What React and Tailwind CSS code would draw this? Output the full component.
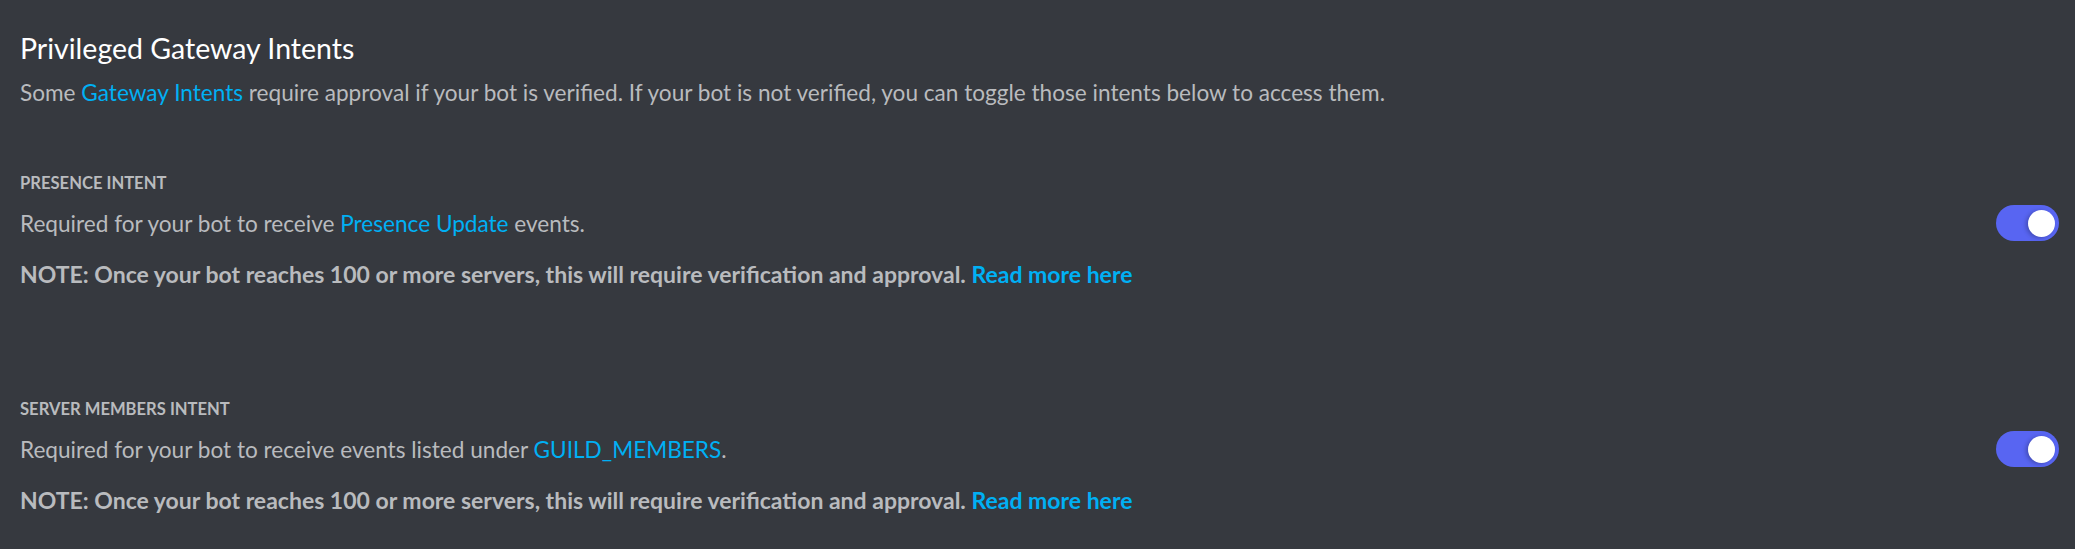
const Toggle = () => (
  <div className="w-[63px] h-[36px] rounded-full bg-[#5865f2] flex items-center justify-end pr-[4px] shrink-0">
    <div className="w-[27px] h-[27px] rounded-full bg-white shadow-[-2px_1px_4px_rgba(0,0,0,0.25)]" />
  </div>
);

const Link = ({ children, bold }) => (
  <span className={bold ? 'text-[#00b0f4] font-bold' : 'text-[#00b0f4]'}>{children}</span>
);

const Intent = ({ label, children, className }) => (
  <div className={className}>
    <div className="text-[16.6px] leading-[24px] font-bold uppercase text-[#b9bbbe]">{label}</div>
    <div className="mt-[10px] flex items-center justify-between pr-[16px]">
      <p className="pt-[2px] text-[22.6px] leading-[30px] text-[#b9bbbe]">{children}</p>
      <Toggle />
    </div>
    <p className="mt-[18px] text-[23px] leading-[30px] font-bold text-[#b9bbbe]">
      NOTE: Once your bot reaches 100 or more servers, this will require verification and approval.{' '}
      <Link bold>Read more here</Link>
    </p>
  </div>
);

export default function App() {
  return (
    <div className="min-h-screen w-full bg-[#36393f] pl-[20px] pt-[30px] font-['Lato',sans-serif]">
      <h2 className="text-[28.5px] leading-[36px] text-white font-normal">Privileged Gateway Intents</h2>
      <p className="mt-[12px] text-[22.6px] leading-[30px] text-[#b9bbbe]">
        Some <Link>Gateway Intents</Link> require approval if your bot is verified. If your bot is not verified, you can toggle those intents below to access them.
      </p>

      <Intent label="Presence Intent" className="mt-[63px]">
        Required for your bot to receive <Link>Presence Update</Link> events.
      </Intent>

      <Intent label="Server Members Intent" className="mt-[108px]">
        Required for your bot to receive events listed under <Link>GUILD_MEMBERS</Link>.
      </Intent>
    </div>
  );
}
